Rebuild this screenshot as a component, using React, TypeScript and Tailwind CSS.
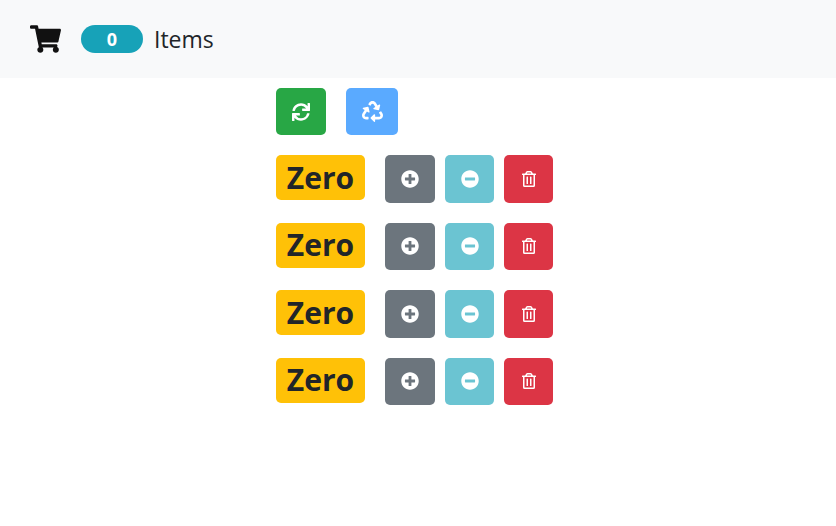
import React from "react";
import { FaShoppingCart, FaSync, FaRecycle, FaPlusCircle, FaMinusCircle, FaRegTrashAlt } from "react-icons/fa";

function CounterRow() {
  return (
    <div className="flex items-start mb-[20px]">
      <span className="w-[89px] h-[45px] flex items-center justify-center rounded-[5px] bg-[#ffc107] text-[#212529] text-[30px] font-bold leading-none">
        Zero
      </span>
      <button className="ml-[20px] w-[50px] h-[47.5px] flex items-center justify-center rounded-[5px] bg-[#6c757d] text-white">
        <FaPlusCircle className="text-[18px]" />
      </button>
      <button className="ml-[10px] w-[49px] h-[47.5px] flex items-center justify-center rounded-[5px] bg-[#6bc4d2] text-white">
        <FaMinusCircle className="text-[18px]" />
      </button>
      <button className="ml-[10px] w-[49px] h-[47.5px] flex items-center justify-center rounded-[5px] bg-[#dc3545] text-white">
        <FaRegTrashAlt className="text-[16px]" />
      </button>
    </div>
  );
}

export default function App() {
  return (
    <div className="w-[836px] h-[526px] bg-white overflow-hidden font-['Open_Sans','Noto_Sans',sans-serif]">
      <nav className="h-[78px] bg-[#f8f9fa] flex items-center pl-[30px]">
        <FaShoppingCart className="text-[31px] w-[31px] h-[28px] text-[#111]" />
        <span className="ml-[20px] w-[62px] h-[28px] rounded-full bg-[#17a2b8] text-white text-[18px] font-bold flex items-center justify-center">
          0
        </span>
        <span className="ml-[11px] text-[23px] text-[#212529] leading-none">Items</span>
      </nav>
      <div className="pl-[276px] pt-[10px]">
        <div className="flex mb-[20px]">
          <button className="w-[50px] h-[47px] flex items-center justify-center rounded-[5px] bg-[#28a745] text-white">
            <FaSync className="text-[18px]" />
          </button>
          <button className="ml-[20px] w-[52px] h-[47px] flex items-center justify-center rounded-[5px] bg-[#5aaaff] text-white">
            <FaRecycle className="text-[21px]" />
          </button>
        </div>
        <CounterRow />
        <CounterRow />
        <CounterRow />
        <CounterRow />
      </div>
    </div>
  );
}
